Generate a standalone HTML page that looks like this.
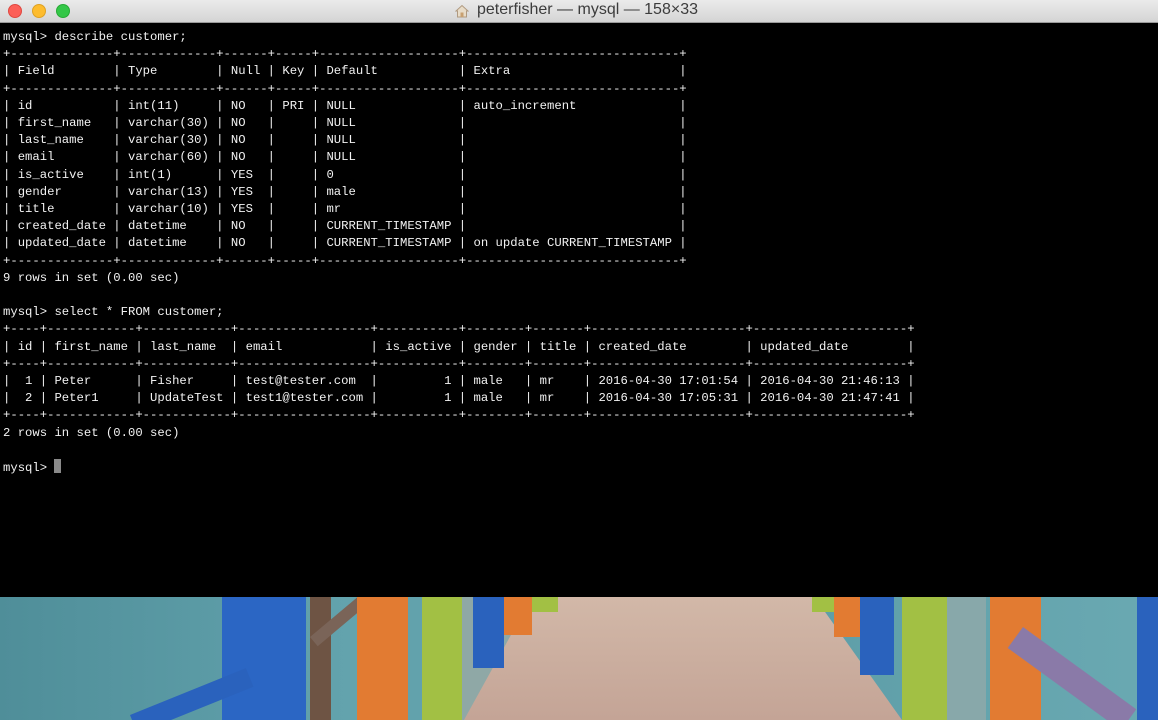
<!DOCTYPE html>
<html><head><meta charset="utf-8">
<style>
html,body{margin:0;padding:0;width:1158px;height:720px;overflow:hidden;background:#000;}
.title{position:absolute;left:0;top:0;width:1158px;height:22px;background:linear-gradient(#ebebeb,#d4d4d4);border-bottom:1px solid #9a9a9a;}
.dot{position:absolute;top:4px;width:12px;height:12px;border-radius:50%;}
.ttl{position:absolute;left:477px;top:1px;font:16px "Liberation Sans",sans-serif;color:#3c3c3c;white-space:nowrap;}
pre{position:absolute;left:3px;top:29px;margin:0;font:12.25px/17.2px "Liberation Mono",monospace;color:#f2f2f2;}
.cur{display:inline-block;width:7px;height:14px;background:#8a8a8a;vertical-align:-2px;}
.img{position:absolute;left:0;top:597px;width:1158px;height:123px;background:linear-gradient(90deg,#4f8e99,#63a3ad 30%,#5e9ea8 70%,#6aa9b2);overflow:hidden;}
.img div{position:absolute;}
</style></head><body>
<div class="title">
<div class="dot" style="left:8px;background:#fc5f57;border:1px solid #df4840"></div>
<div class="dot" style="left:32px;background:#fdbc2e;border:1px solid #dea123"></div>
<div class="dot" style="left:56px;background:#34c748;border:1px solid #27aa35"></div>
<svg style="position:absolute;left:455px;top:4px" width="14" height="14" viewBox="0 0 14 14"><path d="M1 7 L7 1.5 L13 7 L11.5 7 L11.5 13 L2.5 13 L2.5 7 Z" fill="#e8dcc8" stroke="#b09a80" stroke-width="1"/><rect x="5.5" y="8.5" width="3" height="4.5" fill="#c8a070"/></svg>
<div class="ttl">peterfisher — mysql — 158×33</div>
</div>
<pre>mysql&gt; describe customer;
+--------------+-------------+------+-----+-------------------+-----------------------------+
| Field        | Type        | Null | Key | Default           | Extra                       |
+--------------+-------------+------+-----+-------------------+-----------------------------+
| id           | int(11)     | NO   | PRI | NULL              | auto_increment              |
| first_name   | varchar(30) | NO   |     | NULL              |                             |
| last_name    | varchar(30) | NO   |     | NULL              |                             |
| email        | varchar(60) | NO   |     | NULL              |                             |
| is_active    | int(1)      | YES  |     | 0                 |                             |
| gender       | varchar(13) | YES  |     | male              |                             |
| title        | varchar(10) | YES  |     | mr                |                             |
| created_date | datetime    | NO   |     | CURRENT_TIMESTAMP |                             |
| updated_date | datetime    | NO   |     | CURRENT_TIMESTAMP | on update CURRENT_TIMESTAMP |
+--------------+-------------+------+-----+-------------------+-----------------------------+
9 rows in set (0.00 sec)

mysql&gt; select * FROM customer;
+----+------------+------------+------------------+-----------+--------+-------+---------------------+---------------------+
| id | first_name | last_name  | email            | is_active | gender | title | created_date        | updated_date        |
+----+------------+------------+------------------+-----------+--------+-------+---------------------+---------------------+
|  1 | Peter      | Fisher     | test@tester.com  |         1 | male   | mr    | 2016-04-30 17:01:54 | 2016-04-30 21:46:13 |
|  2 | Peter1     | UpdateTest | test1@tester.com |         1 | male   | mr    | 2016-04-30 17:05:31 | 2016-04-30 21:47:41 |
+----+------------+------------+------------------+-----------+--------+-------+---------------------+---------------------+
2 rows in set (0.00 sec)

mysql&gt; <span class="cur"></span></pre>
<div class="img">
<div style="left:440px;top:0;width:300px;height:123px;background:#8fa8a6"></div>
<div style="left:464px;top:0;width:438px;height:123px;background:linear-gradient(#d2b8a8,#c4a496);clip-path:polygon(15.5% 0,80% 0,100% 100%,0 100%)"></div>
<div style="left:222px;top:0;width:84px;height:123px;background:#2b66c4"></div>
<div style="left:310px;top:0;width:21px;height:123px;background:#6e5444"></div>
<div style="left:310px;top:40px;width:72px;height:12px;background:#7a6458;transform:rotate(-40deg);transform-origin:0 0"></div>
<div style="left:357px;top:0;width:51px;height:123px;background:#e27b32"></div>
<div style="left:422px;top:0;width:40px;height:123px;background:#a2c044"></div>
<div style="left:473px;top:0;width:31px;height:71px;background:#2a62bd"></div>
<div style="left:504px;top:0;width:28px;height:38px;background:#e27b32"></div>
<div style="left:532px;top:0;width:26px;height:15px;background:#a2c044"></div>
<div style="left:812px;top:0;width:26px;height:15px;background:#a2c044"></div>
<div style="left:834px;top:0;width:30px;height:40px;background:#e27b32"></div>
<div style="left:860px;top:0;width:34px;height:78px;background:#2a62bd"></div>
<div style="left:902px;top:0;width:45px;height:123px;background:#a2c044"></div>
<div style="left:947px;top:0;width:39px;height:123px;background:#88a8aa"></div>
<div style="left:990px;top:0;width:51px;height:123px;background:#e27b32"></div>
<div style="left:1023px;top:30px;width:140px;height:26px;background:#8a7aa8;transform:rotate(36deg);transform-origin:0 0"></div>
<div style="left:1137px;top:0;width:21px;height:123px;background:#2a62bd"></div>
<div style="left:130px;top:118px;width:125px;height:20px;background:#2a62bd;transform:rotate(-22deg);transform-origin:0 0"></div>
</div>
</body></html>
